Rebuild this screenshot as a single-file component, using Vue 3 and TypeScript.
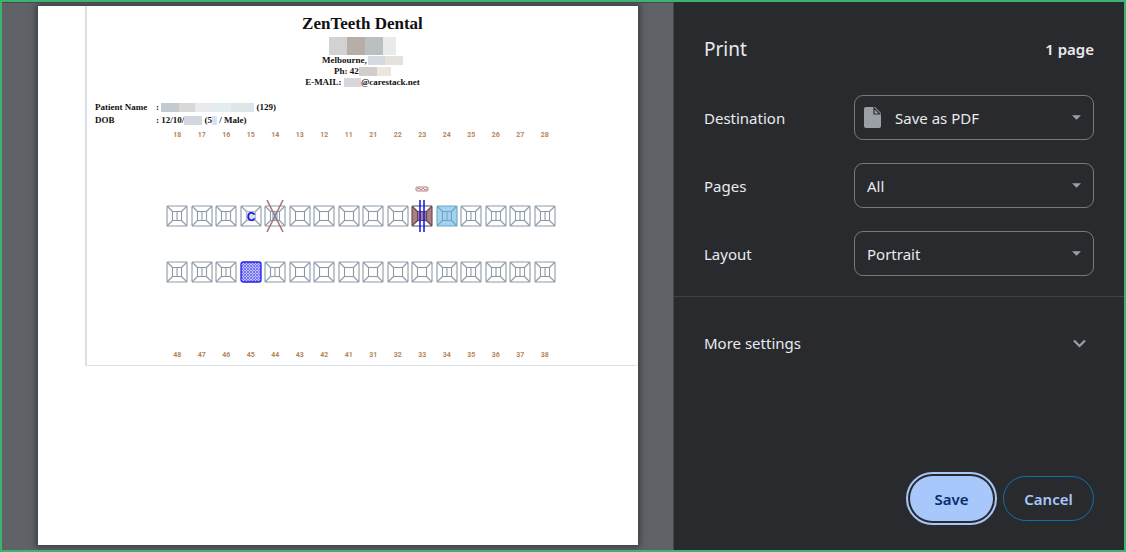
<script setup lang="ts">
import { ref } from 'vue'

interface Tooth {
  id: number
  anterior: boolean
}

const makeRow = (right: number, left: number): Tooth[] => {
  const row: Tooth[] = []
  for (let n = 8; n >= 1; n--) row.push({ id: right * 10 + n, anterior: n <= 3 })
  for (let n = 1; n <= 8; n++) row.push({ id: left * 10 + n, anterior: n <= 3 })
  return row
}

const upper = makeRow(1, 2)
const lower = makeRow(4, 3)

const destination = ref('Save as PDF')
const pages = ref('All')
const layout = ref('Portrait')
const expanded = ref(false)
</script>

<template>
  <div class="window">
    <main class="preview">
      <article class="paper">
        <section class="report">
          <header class="clinic">
            <h1>ZenTeeth Dental</h1>
            <div class="logo"><i class="g1"></i><i class="g2"></i><i class="g3"></i><i class="g4"></i></div>
            <p>Melbourne,<span class="mask city"></span></p>
            <p>Ph: 42<span class="mask phone"></span></p>
            <p>E-MAIL: <span class="mask mail"></span>@carestack.net</p>
          </header>
          <dl class="patient">
            <dt>Patient Name</dt>
            <dd>: <span class="mask name"></span> (129)</dd>
            <dt>DOB</dt>
            <dd>: 12/10/<span class="mask year"></span> (5<span class="mask age"></span> / Male)</dd>
          </dl>
          <div class="chart">
            <div class="numbers"><span v-for="t in upper" :key="t.id">{{ t.id }}</span></div>
            <div class="teeth upper">
              <svg v-for="t in upper" :key="t.id" class="tooth" viewBox="0 0 24 64">
                <g v-if="t.id === 23">
                  <path d="M2 22L8 28V37L2 42ZM22 22L16 28V37L22 42Z" fill="#ad8080" />
                  <rect x="8" y="28" width="8" height="9" fill="#ad8080" />
                </g>
                <rect v-if="t.id === 24" x="2" y="22" width="20" height="20" fill="#a3d3f0" />
                <g class="outline" :class="{ dark: t.id === 23, sky: t.id === 24 }">
                  <rect x="2" y="22" width="20" height="20" rx="1" />
                  <rect x="7.5" y="27.5" width="9" height="9" />
                  <path d="M2 22L7.5 27.5M22 22L16.5 27.5M2 42L7.5 36.5M22 42L16.5 36.5" />
                  <path v-if="!t.anterior && t.id !== 15" d="M12 27.5V36.5" />
                </g>
                <g v-if="t.id === 15">
                  <rect x="7.5" y="27.5" width="9" height="9" fill="#d9dfe6" />
                  <text x="12" y="37" text-anchor="middle" class="crown">C</text>
                </g>
                <g v-if="t.id === 14">
                  <rect x="9" y="29" width="6" height="7" fill="#a3d3f0" />
                  <path d="M4 16L20 48M20 16L4 48" stroke="#a87474" stroke-width="1.6" />
                </g>
                <g v-if="t.id === 23">
                  <rect x="6" y="3" width="12" height="4" rx="1" fill="#f4e8e8" stroke="#b58585" />
                  <path d="M7 5l2-1 2 2 2-2 2 2 2-1" fill="none" stroke="#b58585" />
                  <path d="M10 16V48M14 16V48" stroke="#1010ee" stroke-width="1.5" />
                </g>
              </svg>
            </div>
            <div class="teeth lower">
              <svg v-for="t in lower" :key="t.id" class="tooth" viewBox="0 0 24 24">
                <defs v-if="t.id === 45">
                  <pattern id="checks" width="3" height="3" patternUnits="userSpaceOnUse">
                    <rect width="3" height="3" fill="#c4c4fa" />
                    <path d="M0 0L3 3M3 0L0 3" stroke="#6060f0" stroke-width=".8" />
                  </pattern>
                </defs>
                <rect v-if="t.id === 45" x="2" y="2" width="20" height="20" rx="2" fill="url(#checks)" stroke="#2020ee" stroke-width="1.3" />
                <g v-else class="outline">
                  <rect x="2" y="2" width="20" height="20" rx="1" />
                  <rect x="7.5" y="7.5" width="9" height="9" />
                  <path d="M2 2L7.5 7.5M22 2L16.5 7.5M2 22L7.5 16.5M22 22L16.5 16.5" />
                  <path v-if="!t.anterior" d="M12 7.5V16.5" />
                </g>
              </svg>
            </div>
            <div class="numbers"><span v-for="t in lower" :key="t.id">{{ t.id }}</span></div>
          </div>
        </section>
      </article>
    </main>

    <aside class="panel">
      <header class="heading">
        <h2>Print</h2>
        <strong>1 page</strong>
      </header>
      <form class="settings" @submit.prevent>
        <div class="field">
          <label for="destination">Destination</label>
          <div class="control with-icon">
            <svg class="file" viewBox="0 0 17 21"><path d="M2 0H11L17 6V19Q17 21 15 21H2Q0 21 0 19V2Q0 0 2 0Z" fill="#9aa0a6" /><path d="M10 1V7H16Z" fill="#9aa0a6" stroke="#292a2d" stroke-width="1.2" /></svg>
            <select id="destination" v-model="destination"><option>Save as PDF</option></select>
            <svg class="arrow" viewBox="0 0 10 5"><path d="M0 0H10L5 5Z" fill="#9aa0a6" /></svg>
          </div>
        </div>
        <div class="field">
          <label for="pages">Pages</label>
          <div class="control">
            <select id="pages" v-model="pages"><option>All</option></select>
            <svg class="arrow" viewBox="0 0 10 5"><path d="M0 0H10L5 5Z" fill="#9aa0a6" /></svg>
          </div>
        </div>
        <div class="field">
          <label for="layout">Layout</label>
          <div class="control">
            <select id="layout" v-model="layout"><option>Portrait</option><option>Landscape</option></select>
            <svg class="arrow" viewBox="0 0 10 5"><path d="M0 0H10L5 5Z" fill="#9aa0a6" /></svg>
          </div>
        </div>
      </form>
      <button class="more" type="button" :aria-expanded="expanded" @click="expanded = !expanded">
        More settings
        <svg viewBox="0 0 13 9"><path d="M1 1.5L6.5 7L12 1.5" fill="none" stroke="#9aa0a6" stroke-width="2.2" /></svg>
      </button>
      <footer class="actions">
        <button class="save" type="button">Save</button>
        <button class="cancel" type="button">Cancel</button>
      </footer>
    </aside>
  </div>
</template>

<style>
body {
  background: #292a2d;
}
</style>

<style scoped>
* {
  box-sizing: border-box;
}
h1,
h2,
p,
dl,
dd {
  margin: 0;
}
.window {
  display: flex;
  height: 100vh;
  border: 2px solid #3cb371;
  font-family: "Noto Sans", "Open Sans", sans-serif;
  color: #e8eaed;
}
.preview {
  flex: 1;
  display: flex;
  padding: 3px 35px 5px 36px;
  background: #5f6368;
  border-top: 1px solid #46474b;
  overflow: hidden;
}
.paper {
  flex: 1;
  padding-left: 47px;
  background: #fff;
  box-shadow: 0 0 6px 2px rgba(20, 20, 25, 0.5);
}
.report {
  padding-bottom: 5px;
  border: solid #dcdfe4;
  border-width: 0 0 1px 2px;
  border-bottom-right-radius: 3px;
  color: #111;
  font: bold 9px/11px "Liberation Serif", serif;
}
.clinic {
  text-align: center;
  padding-top: 8px;
}
.clinic h1 {
  font-size: 17px;
  line-height: 20px;
  margin-bottom: 3px;
}
.logo {
  display: flex;
  justify-content: center;
  height: 18px;
}
.logo i {
  width: 18px;
}
.logo .g1 { background: #d2d2d2; }
.logo .g2 { background: #b8aea9; }
.logo .g3 { background: #b9c0bf; }
.logo .g4 { width: 13px; background: #e9eaec; }
.mask {
  display: inline-block;
  height: 9px;
  vertical-align: -2px;
}
.city { width: 35px; margin-left: 1px; background: linear-gradient(90deg, #d5d9e2 50%, #e5e2dc 50%); }
.phone { width: 32px; background: linear-gradient(90deg, #d2cccd 55%, #eee5dc 55%); }
.mail { width: 17px; background: #dad4dc; }
.name { width: 93px; background: linear-gradient(90deg, #c3cad1 19%, #d8d8d8 19% 37%, #e9eaee 37% 56%, #e3ecf0 56% 75%, #dfe8e6 75% 94%, #dce4f0 94%); }
.year { width: 18px; background: #d2d7df; }
.age { width: 5px; background: #d5e2f1; }
.patient {
  display: grid;
  grid-template-columns: 61px 1fr;
  row-gap: 2px;
  margin-top: 14px;
  padding-left: 8px;
}
.chart {
  width: 392px;
  margin: 4px auto 0 78px;
}
.numbers {
  display: grid;
  grid-template-columns: repeat(16, 1fr);
  text-align: center;
  font: bold 7px/10px Roboto, sans-serif;
  color: #b5855a;
}
.teeth {
  display: grid;
  grid-template-columns: repeat(16, 1fr);
}
.tooth {
  display: block;
  width: 24px;
  height: 24px;
}
.upper {
  margin-top: 44px;
}
.upper .tooth {
  height: 64px;
}
.lower {
  margin: 12px 0 66px;
}
.outline {
  fill: none;
  stroke: #8c9aa8;
  stroke-width: 1.1;
}
.outline.dark { stroke: #5c4858; }
.outline.sky { stroke: #6fa3c4; }
.crown {
  font: bold 12px "Liberation Sans", sans-serif;
  fill: #1414ee;
}
.panel {
  flex: 0 0 40.2%;
  display: flex;
  flex-direction: column;
  background: #292a2d;
  border-left: 1px solid #45474b;
  font-size: 15px;
}
.heading {
  display: flex;
  justify-content: space-between;
  align-items: center;
  height: 93px;
  padding: 0 30px;
}
.heading h2 {
  font-size: 19px;
  font-weight: 400;
}
.heading strong {
  font-weight: 600;
}
.settings {
  display: flex;
  flex-direction: column;
  gap: 23px;
  padding: 0 30px 20px;
  border-bottom: 1px solid #3f4144;
}
.field {
  display: flex;
  align-items: center;
  justify-content: space-between;
}
.control {
  position: relative;
  width: 240px;
}
select {
  display: block;
  width: 100%;
  height: 45px;
  padding: 0 32px 0 12px;
  appearance: none;
  background: transparent;
  border: 1px solid #77797c;
  border-radius: 9px;
  color: inherit;
  font: inherit;
}
.with-icon select {
  padding-left: 40px;
}
.file {
  position: absolute;
  left: 10px;
  top: 12px;
  width: 17px;
  height: 21px;
}
.arrow {
  position: absolute;
  right: 13px;
  top: 20px;
  width: 9px;
  height: 5px;
  pointer-events: none;
}
button {
  font: inherit;
  cursor: pointer;
}
.more {
  display: flex;
  align-items: center;
  justify-content: space-between;
  height: 92px;
  padding: 0 38px 0 30px;
  border: 0;
  background: none;
  color: inherit;
}
.more svg {
  width: 13px;
  height: 9px;
}
.actions {
  display: flex;
  justify-content: flex-end;
  gap: 10px;
  margin-top: auto;
  padding: 0 30px 29px;
}
.actions button {
  height: 45px;
  border-radius: 23px;
  font-weight: 600;
}
.save {
  width: 83px;
  border: 0;
  background: #a8c7fa;
  color: #062e6f;
  outline: 2px solid #a8c7fa;
  outline-offset: 2px;
}
.cancel {
  width: 91px;
  border: 1px solid #0b73a8;
  background: none;
  color: #a8c7fa;
}
</style>
